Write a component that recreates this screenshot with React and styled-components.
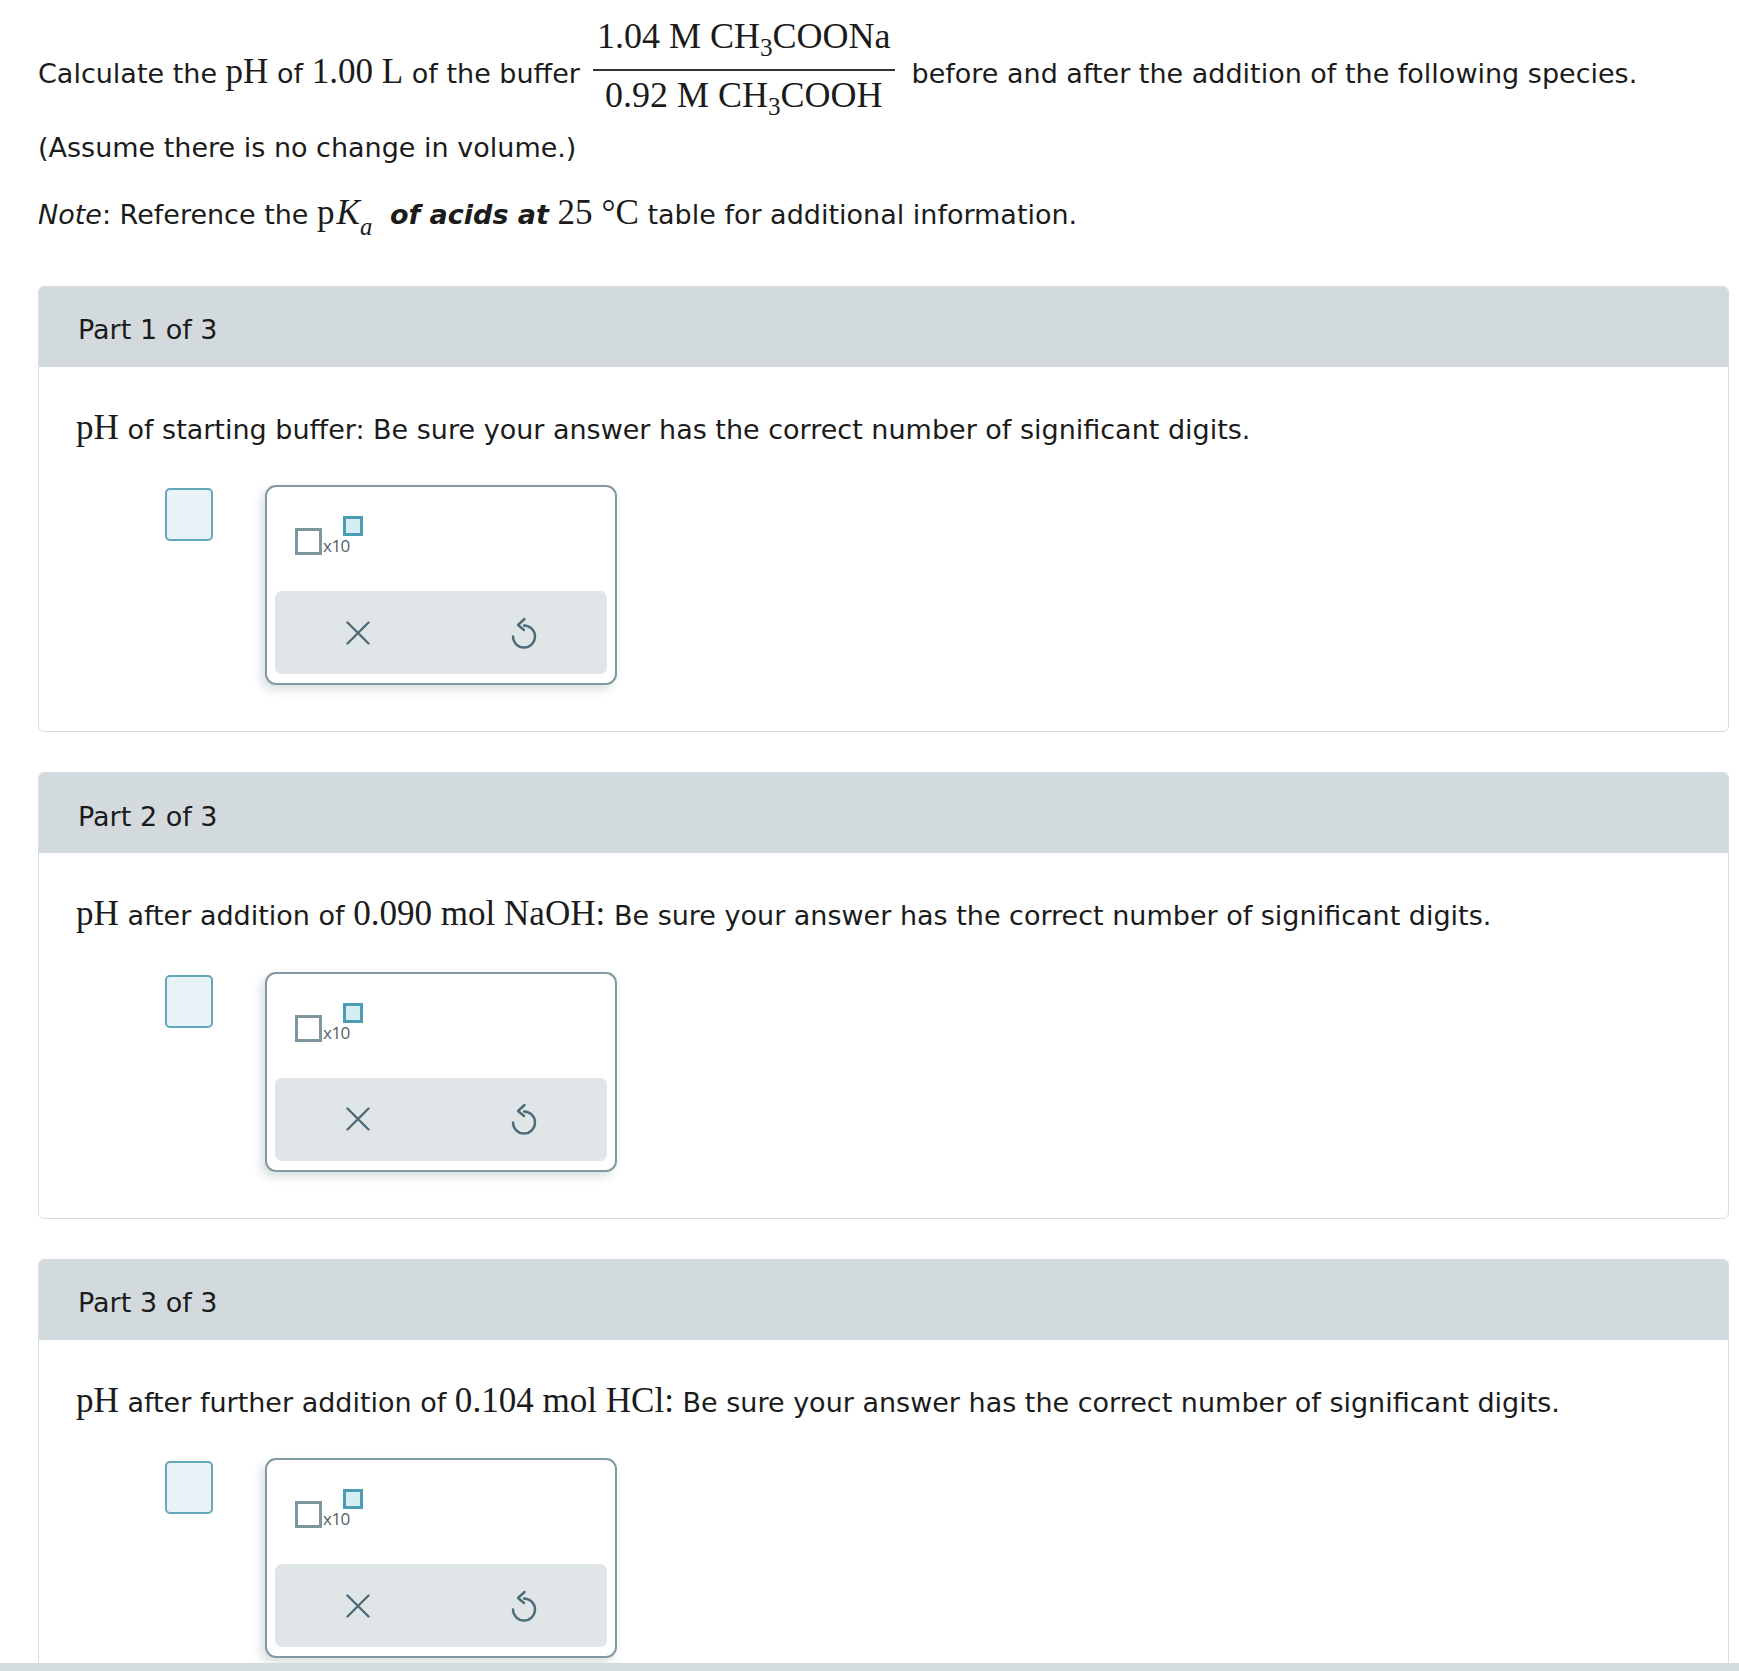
import React from "react";
import styled, { createGlobalStyle } from "styled-components";

const GlobalStyle = createGlobalStyle`
  html, body {
    margin: 0;
    padding: 0;
    overflow: hidden;
    background: #fff;
  }
  body {
    font-family: "DejaVu Sans", Verdana, sans-serif;
    font-size: 27px;
    color: #1b1b1b;
  }
`;

// prompts are render functions so the styled parts below exist when they run
const parts = [
  {
    id: 1,
    prompt: () => (
      <>
        <M>pH</M> of starting buffer: Be sure your answer has the correct number of significant digits.
      </>
    ),
  },
  {
    id: 2,
    prompt: () => (
      <>
        <M>pH</M> after addition of <M>0.090</M> <M>mol NaOH:</M> Be sure your answer has the correct number of
        significant digits.
      </>
    ),
  },
  {
    id: 3,
    prompt: () => (
      <>
        <M>pH</M> after further addition of <M>0.104</M> <M>mol HCl:</M> Be sure your answer has the correct number of
        significant digits.
      </>
    ),
  },
];

function XIcon() {
  return (
    <svg width="24" height="24" viewBox="0 0 24 24" fill="none" stroke="#4e6b77" strokeWidth="2.4" strokeLinecap="round">
      <path d="M1.5 1.5 L22.5 22.5 M22.5 1.5 L1.5 22.5" />
    </svg>
  );
}

function UndoIcon() {
  return (
    <svg width="26" height="32" viewBox="0 0 26 32" fill="none" stroke="#4e6b77" strokeWidth="2.4" strokeLinecap="round" strokeLinejoin="round">
      <path d="M13 8.5 A11 11 0 1 1 2 19.5" />
      <path d="M13.5 2 L7 8 L13 13" />
    </svg>
  );
}

function Keypad() {
  return (
    <KeypadBox>
      <ExpArea>
        <SciIcon>
          <BaseBox />
          <TenText>x10</TenText>
          <SupBox />
        </SciIcon>
      </ExpArea>
      <ButtonBar>
        <IconButton aria-label="clear">
          <XIcon />
        </IconButton>
        <IconButton aria-label="undo">
          <UndoIcon />
        </IconButton>
      </ButtonBar>
    </KeypadBox>
  );
}

export default function App() {
  return (
    <Page>
      <GlobalStyle />
      <IntroRow>
        <IntroText>
          Calculate the <M>pH</M> of <M>1.00 L</M> of the buffer
        </IntroText>
        <Frac>
          <Num>
            1.04 M CH<Sub>3</Sub>COONa
          </Num>
          <FracBar />
          <Den>
            0.92 M CH<Sub>3</Sub>COOH
          </Den>
        </Frac>
        <IntroText>before and after the addition of the following species.</IntroText>
      </IntroRow>

      <Para $top={19.5}>(Assume there is no change in volume.)</Para>
      <Para $top={34.5}>
        <em>Note</em>: Reference the <M>p</M>
        <M $italic>
          <KSym>K</KSym>
          <Sub $low>a</Sub>
        </M>{" "}
        <BoldItalic>of acids at</BoldItalic> <M>25 °C</M> table for additional information.
      </Para>

      <Cards>
        {parts.map((p) => (
          <Card key={p.id}>
            <CardHeader>
              Part {p.id} of {parts.length}
            </CardHeader>
            <CardBody>
              <Question>{p.prompt()}</Question>
              <AnswerRow>
                <AnswerBox />
                <Keypad />
              </AnswerRow>
            </CardBody>
          </Card>
        ))}
      </Cards>
      <BottomStrip />
    </Page>
  );
}

const Page = styled.div`
  padding: 17.5px 10px 0 38px;
`;

const M = styled.span`
  font-family: "Liberation Serif", "Times New Roman", serif;
  font-size: 1.3em;
  font-style: ${(p) => (p.$italic ? "italic" : "normal")};
  line-height: 0;
  white-space: nowrap;
`;

const KSym = styled.span`
  margin-left: 2px;
`;

const Sub = styled.span`
  font-size: 0.7em;
  vertical-align: ${(p) => (p.$low ? "-0.45em" : "-0.3em")};
  line-height: 0;
  margin-right: ${(p) => (p.$low ? "9px" : "0")};
`;

const BoldItalic = styled.b`
  font-style: italic;
  font-weight: 700;
`;

const IntroRow = styled.div`
  display: flex;
  align-items: flex-start;
`;

const IntroText = styled.div`
  margin-top: 40px;
  line-height: 32px;
  white-space: nowrap;
`;

const Frac = styled.div`
  display: flex;
  flex-direction: column;
  align-items: center;
  margin: 0 17px 0 13px;
  font-family: "Liberation Serif", "Times New Roman", serif;
  font-size: 36px;
`;

const Num = styled.div`
  line-height: 36px;
  padding: 0 4px 15.5px;
  white-space: nowrap;
`;

const FracBar = styled.div`
  align-self: stretch;
  height: 2px;
  background: #333;
`;

const Den = styled.div`
  line-height: 36px;
  padding: 5.5px 4px 0;
  white-space: nowrap;
`;

const Para = styled.p`
  margin: ${(p) => p.$top}px 0 0;
  line-height: 32px;
`;

const Cards = styled.div`
  display: flex;
  flex-direction: column;
  gap: 40px;
  margin-top: 55px;
`;

const Card = styled.section`
  border: 1px solid #d6dcdf;
  border-radius: 6px;
  overflow: hidden;
  background: #fff;
`;

const CardHeader = styled.div`
  height: 80px;
  box-sizing: border-box;
  display: flex;
  align-items: center;
  padding: 6px 0 0 39px;
  background: #d3dadd;
`;

const CardBody = styled.div`
  padding: 47px 37px 46px;
`;

const Question = styled.p`
  margin: 0;
  line-height: 32px;
`;

const AnswerRow = styled.div`
  display: flex;
  align-items: flex-start;
  gap: 52px;
  margin-top: 39.5px;
  padding-left: 89px;
`;

const AnswerBox = styled.div`
  width: 48px;
  height: 53px;
  margin-top: 3px;
  box-sizing: border-box;
  border: 2px solid #62a7ba;
  border-radius: 5px;
  background: #e8f3f8;
`;

const KeypadBox = styled.div`
  width: 352px;
  height: 200px;
  box-sizing: border-box;
  border: 2px solid #8199a3;
  border-radius: 11px;
  background: #fff;
  padding: 8px 8px 9px;
  display: flex;
  flex-direction: column;
  box-shadow: -4px 5px 10px rgba(40, 60, 70, 0.16);
`;

const ExpArea = styled.div`
  height: 96px;
  box-sizing: border-box;
  padding: 21px 0 0 20px;
`;

const SciIcon = styled.div`
  display: inline-flex;
  align-items: flex-end;
  height: 39px;
`;

const BaseBox = styled.span`
  width: 27px;
  height: 27px;
  box-sizing: border-box;
  border: 3px solid #7e959d;
`;

const TenText = styled.span`
  font-family: "Open Sans", Lato, sans-serif;
  font-size: 17px;
  line-height: 17px;
  color: #4f6069;
  margin: 0 0 1px 1px;
  letter-spacing: -0.5px;
`;

const SupBox = styled.span`
  align-self: flex-start;
  width: 20px;
  height: 20px;
  box-sizing: border-box;
  border: 3px solid #4a9db5;
  background: #d5edf3;
  margin-left: -7px;
`;

const ButtonBar = styled.div`
  flex: 1;
  display: grid;
  grid-template-columns: 1fr 1fr;
  background: #e0e5e8;
  border-radius: 7px;
`;

const IconButton = styled.button`
  border: 0;
  background: transparent;
  display: flex;
  align-items: center;
  justify-content: center;
  padding: 0;
  cursor: pointer;
`;

const BottomStrip = styled.div`
  position: fixed;
  left: 0;
  right: 0;
  bottom: 0;
  height: 8px;
  background: #d4dbdf;
`;
